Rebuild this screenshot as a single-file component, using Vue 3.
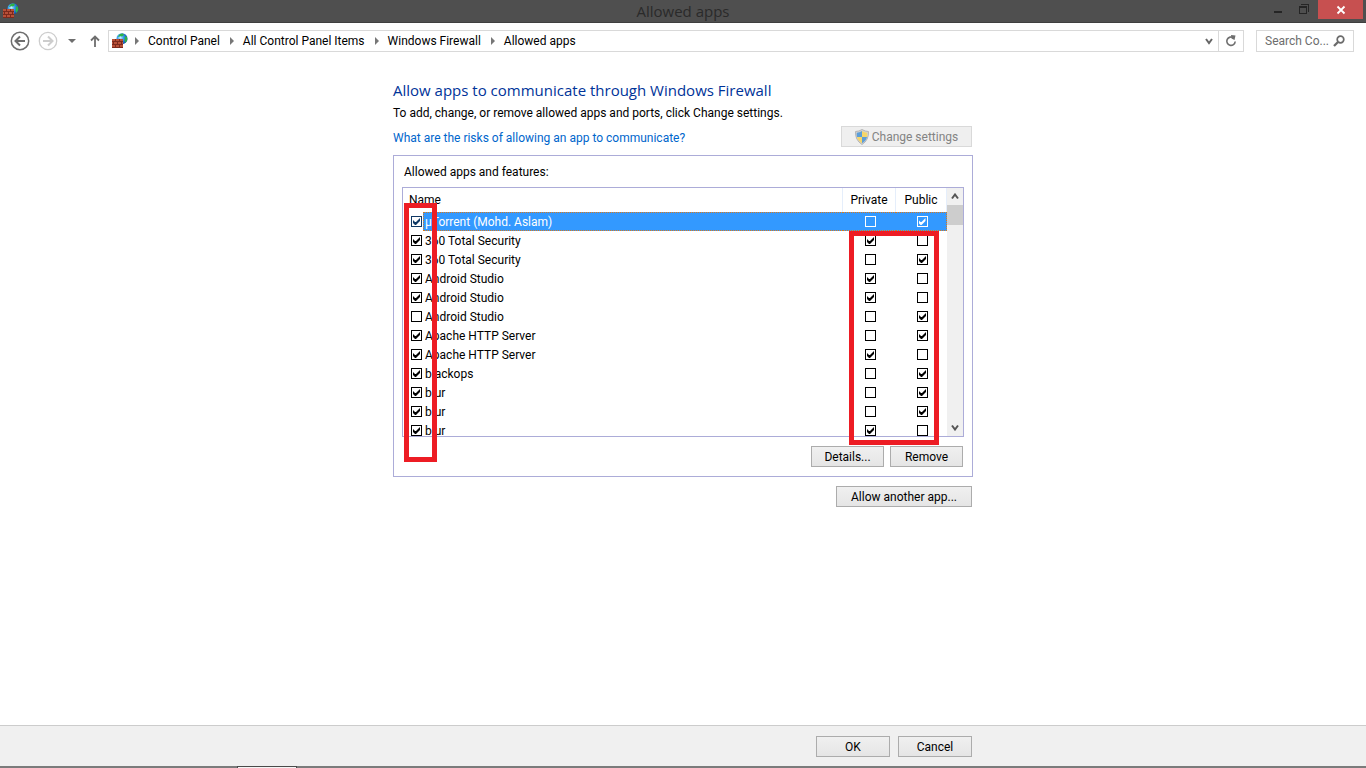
<script setup>
import { ref } from 'vue'

const crumbs = ['Control Panel', 'All Control Panel Items', 'Windows Firewall', 'Allowed apps']

const apps = ref([
  { name: 'µTorrent (Mohd. Aslam)', on: true, priv: false, pub: true },
  { name: '360 Total Security', on: true, priv: true, pub: false },
  { name: '360 Total Security', on: true, priv: false, pub: true },
  { name: 'Android Studio', on: true, priv: true, pub: false },
  { name: 'Android Studio', on: true, priv: true, pub: false },
  { name: 'Android Studio', on: false, priv: false, pub: true },
  { name: 'Apache HTTP Server', on: true, priv: false, pub: true },
  { name: 'Apache HTTP Server', on: true, priv: true, pub: false },
  { name: 'blackops', on: true, priv: false, pub: true },
  { name: 'blur', on: true, priv: false, pub: true },
  { name: 'blur', on: true, priv: false, pub: true },
  { name: 'blur', on: true, priv: true, pub: false }
])
const selected = ref(0)
</script>

<template>
  <div class="window">
    <svg class="defs" width="0" height="0" aria-hidden="true">
      <defs>
        <radialGradient id="globe" cx="0.35" cy="0.4" r="0.7">
          <stop offset="0" stop-color="#c9f4ff" />
          <stop offset="0.4" stop-color="#3aa0f0" />
          <stop offset="1" stop-color="#0b3fa8" />
        </radialGradient>
        <symbol id="firewall" viewBox="0 0 16 16">
          <circle cx="10" cy="5.7" r="5.5" fill="url(#globe)" />
          <path d="M8 1 L11 0.5 L12 2 L10 3.5 L8 3 L7 4 L6 3.5Z M13 3 L15 4 L15.3 7 L13.5 10 L12.500 8Z" fill="#2fb344" />
          <rect x="0" y="6" width="11" height="9" fill="#7d2a1c" />
          <path d="M0 6h3v2H0z M4 6h3v2H4z M8 6h3v2H8z M0 9h1v2H0z M2 9h3v2H2z M6 9h3v2H6z M10 9h1v2h-1z M0 12h3v2H0z M4 12h3v2H4z M8 12h3v2H8z" fill="#b85038" />
        </symbol>
      </defs>
    </svg>

    <header class="titlebar">
      <svg class="app-icon" width="16" height="16"><use href="#firewall" /></svg>
      <h1>Allowed apps</h1>
      <div class="controls">
        <button class="min" aria-label="Minimize">
          <svg width="12" height="12"><path d="M2 6h8v2H2z" fill="#252525" /></svg>
        </button>
        <button class="max" aria-label="Restore">
          <svg width="12" height="12" shape-rendering="crispEdges"><path d="M1 3h8v8H1z M2 5v5h6V5z M3 1h8v8h-1V2H3z" fill="#252525" fill-rule="evenodd" /></svg>
        </button>
        <button class="close" aria-label="Close">
          <svg width="10" height="10"><path d="M1.5 1.5l7 7M8.500 1.500l-7 7" stroke="#fff" stroke-width="1.8" /></svg>
        </button>
      </div>
    </header>

    <nav class="toolbar" aria-label="Navigation">
      <button class="back" aria-label="Back">
        <svg width="20" height="20" fill="none" stroke="#6e6e6e"><circle cx="10" cy="10" r="8.700" stroke-width="1.500" /><path d="M15 10H6M10 5.500L5.500 10L10 14.500" stroke-width="2" /></svg>
      </button>
      <button class="forward" aria-label="Forward">
        <svg width="20" height="20" fill="none" stroke="#cdcdcd"><circle cx="10" cy="10" r="8.700" stroke-width="1.300" /><path d="M5 10h9M10 5.500L14.500 10L10 14.500" stroke-width="2" /></svg>
      </button>
      <button class="recent" aria-label="Recent locations">
        <svg width="8" height="4"><path d="M0 0h8L4 4z" fill="#6e6e6e" /></svg>
      </button>
      <button class="up" aria-label="Up">
        <svg width="10" height="12" fill="none" stroke="#6e6e6e" stroke-width="1.800"><path d="M5 12V1.500M1 5.500L5 1.500L9 5.500" /></svg>
      </button>
      <div class="address">
        <svg class="place" width="16" height="16"><use href="#firewall" /></svg>
        <template v-for="crumb in crumbs" :key="crumb">
          <svg class="sep" width="4" height="8"><path d="M0 0l4 4l-4 4z" fill="#777" /></svg>
          <a href="#">{{ crumb }}</a>
        </template>
        <button class="history" aria-label="Previous locations">
          <svg width="8" height="7" fill="none" stroke="#666" stroke-width="2"><path d="M1 1l3 4l3-4" /></svg>
        </button>
        <button class="refresh" aria-label="Refresh">
          <svg width="12" height="12" fill="none" stroke="#6e6e6e" stroke-width="1.600"><path d="M8.500 2.800A4.200 4.200 0 1 0 10.200 6.500" /><path d="M6 0L10.500 0.500L9.500 5L6.500 3.500z" fill="#6e6e6e" stroke="none" /></svg>
        </button>
      </div>
      <div class="search">
        <input type="text" aria-label="Search Control Panel" placeholder="Search Co..." />
        <svg width="12" height="12" fill="none" stroke="#6a6a6a"><circle cx="7.500" cy="4.500" r="3.300" stroke-width="1.700" /><path d="M5 7L1 11" stroke-width="2.300" /></svg>
      </div>
    </nav>

    <main>
      <div class="content">
        <h2>Allow apps to communicate through Windows Firewall</h2>
        <p>To add, change, or remove allowed apps and ports, click Change settings.</p>
        <div class="help-row">
          <a href="#">What are the risks of allowing an app to communicate?</a>
          <button class="btn change" disabled>
            <svg width="14" height="16" viewBox="0 0 14 16">
              <path d="M7 0.500Q10 2.500 13.500 2.500Q14 11 7 15.500Q0 11 0.500 2.500Q4 2.500 7 0.500z" fill="#d4d4d4" stroke="#b5b5b5" />
              <path d="M7 2v6H2Q1.500 6 1.800 3.700Q4.500 3.600 7 2z M7 8h5Q11 12 7 14.200z" fill="#5d9ed8" />
              <path d="M7 2Q9.500 3.600 12.200 3.700Q12.500 6 12 8H7z M2 8h5v6.200Q3 12 2 8z" fill="#f5d66b" />
            </svg>
            Change settings
          </button>
        </div>

        <section class="panel">
          <h3 id="list-title">Allowed apps and features:</h3>
          <div class="list">
            <table aria-labelledby="list-title">
              <thead>
                <tr><th class="name">Name</th><th>Private</th><th>Public</th></tr>
              </thead>
              <tbody>
                <tr v-for="(app, i) in apps" :key="i" :class="{ selected: i === selected }" @click="selected = i">
                  <td class="name">
                    <label><input v-model="app.on" type="checkbox" /><span>{{ app.name }}</span></label>
                  </td>
                  <td><input v-model="app.priv" type="checkbox" :aria-label="app.name + ' private'" /></td>
                  <td><input v-model="app.pub" type="checkbox" :aria-label="app.name + ' public'" /></td>
                </tr>
              </tbody>
            </table>
            <div class="scroll">
              <button aria-label="Scroll up"><svg width="8" height="7" fill="none" stroke="#555" stroke-width="2"><path d="M1 5.500l3-4l3 4" /></svg></button>
              <div class="thumb"></div>
              <button class="down" aria-label="Scroll down"><svg width="8" height="7" fill="none" stroke="#555" stroke-width="2"><path d="M1 1.500l3 4l3-4" /></svg></button>
            </div>
          </div>
          <div class="actions">
            <button class="btn">Details...</button>
            <button class="btn">Remove</button>
          </div>
          <div class="mark mark-left"></div>
          <div class="mark mark-right"></div>
        </section>

        <div class="another">
          <button class="btn wide">Allow another app...</button>
        </div>
      </div>
    </main>

    <footer>
      <div class="footer-inner">
        <button class="btn">OK</button>
        <button class="btn">Cancel</button>
      </div>
    </footer>
    <div class="taskbar"><div class="task"></div></div>
  </div>
</template>

<style>
body {
  margin: 0;
}
</style>

<style scoped>
.window {
  display: flex;
  flex-direction: column;
  min-height: 100vh;
  background: #fff;
  color: #000;
  font: 12px/16px Roboto, "Noto Sans", sans-serif;
}
.window * {
  box-sizing: border-box;
}
.defs {
  position: absolute;
}
button,
input {
  font: inherit;
  color: inherit;
  margin: 0;
}
button {
  display: flex;
  align-items: center;
  justify-content: center;
  padding: 0;
  border: 0;
  background: none;
}
svg {
  display: block;
  flex: none;
}
a {
  text-decoration: none;
  color: inherit;
}
h1,
h2,
h3,
p {
  margin: 0;
  font-weight: 400;
}

.titlebar {
  display: grid;
  grid-template-columns: 1fr auto 1fr;
  height: 23px;
  background: #4f4f4f;
  border-bottom: 1px solid #3f3f3f;
}
.app-icon {
  margin: 3px 0 0 3px;
}
h1 {
  font: 15px/22px "Open Sans", "Noto Sans", sans-serif;
  color: #2a2a2a;
}
.controls {
  display: flex;
  justify-content: flex-end;
  align-items: flex-start;
  padding-right: 3px;
}
.controls button {
  width: 26px;
  height: 19px;
}
.controls .min {
  padding-top: 3px;
}
.controls .max {
  padding-bottom: 1px;
}
.controls .close {
  width: 45px;
  margin-left: 1px;
  background: #c75050;
}

.toolbar {
  display: flex;
  align-items: center;
  height: 36px;
  padding: 0 12px 0 10px;
}
.forward {
  margin-left: 8px;
}
.recent {
  margin-left: 10px;
}
.up {
  margin: 0 8px 0 14px;
}
.address {
  display: flex;
  align-items: center;
  flex: 1;
  height: 22px;
  padding-left: 3px;
  border: 1px solid #d9d9d9;
}
.sep {
  margin: 0 9px 0 10px;
}
.place + .sep {
  margin-left: 7px;
}
.history {
  width: 18px;
  height: 20px;
  margin-left: auto;
}
.refresh {
  width: 25px;
  height: 20px;
  border-left: 1px solid #d9d9d9;
}
.search {
  display: flex;
  align-items: center;
  width: 98px;
  height: 22px;
  margin-left: 12px;
  padding: 0 8px;
  border: 1px solid #d9d9d9;
}
.search input {
  flex: 1;
  min-width: 0;
  padding: 0;
  border: 0;
  outline: 0;
}
.search input::placeholder {
  color: #6d6d6d;
  opacity: 1;
}

main {
  flex: 1;
  padding-top: 20px;
}
.content,
.footer-inner {
  width: 100%;
  max-width: 580px;
  margin: 0 auto;
}
h2 {
  font: 15px/22px "Open Sans", "Noto Sans", sans-serif;
  color: #003399;
}
p {
  margin-top: 4px;
}
.help-row {
  display: flex;
  justify-content: space-between;
  padding-right: 1px;
  margin: 5px 0 8px;
}
.help-row a {
  margin-top: 4px;
  color: #0066cc;
}
.btn {
  min-width: 74px;
  height: 21px;
  border: 1px solid #acacac;
  background: linear-gradient(#f0f0f0, #e5e5e5);
}
.btn:disabled {
  border-color: #d9d9d9;
  background: #efefef;
  color: #838383;
}
.change {
  min-width: 131px;
  gap: 3px;
}
.wide {
  min-width: 136px;
}

.panel {
  position: relative;
  padding: 8px 8px 9px;
  border: 1px solid #acacd8;
}
h3 {
  font-size: 12px;
  line-height: 16px;
  padding-left: 2px;
}
.list {
  display: flex;
  height: 250px;
  margin-top: 7px;
  overflow: hidden;
  border: 1px solid #acacd8;
}
table {
  flex: 1;
  height: 252px;
  border-collapse: separate;
  border-spacing: 0;
  table-layout: fixed;
}
th {
  width: 53px;
  height: 24px;
  padding: 0;
  font-weight: 400;
  border-right: 1px solid #e5eefb;
}
th.name {
  width: auto;
  padding-left: 6px;
  text-align: left;
}
th:last-child {
  width: 51px;
}
td {
  height: 19px;
  padding: 0 0 0 2px;
  text-align: center;
}
td.name {
  padding-left: 8px;
  text-align: left;
}
label {
  display: flex;
  align-items: center;
}
label span {
  flex: 1;
  height: 19px;
  margin-left: 1px;
  padding-left: 2px;
  line-height: 20px;
}
input[type="checkbox"] {
  appearance: none;
  display: block;
  flex: none;
  width: 11px;
  height: 11px;
  margin: 0 auto;
  border: 1px solid #000;
  background: #fff;
}
label input[type="checkbox"] {
  margin: 0;
}
input[type="checkbox"]:checked::before {
  content: "";
  display: block;
  width: 7px;
  height: 7px;
  margin: 1px;
  background: #000;
  clip-path: polygon(0 2px, 2px 4px, 3px 4px, 7px 0, 7px 3px, 3px 7px, 2px 7px, 0 5px);
}
.selected td:not(.name),
.selected label span {
  --dots: repeating-linear-gradient(90deg, #d97a1c 0 1px, #3399ff 1px 2px);
  color: #fff;
  background: var(--dots) top / 100% 1px no-repeat, var(--dots) bottom / 100% 1px no-repeat, #3399ff;
}
.selected label span {
  border-left: 1px dotted #d97a1c;
  padding-left: 1px;
}
.selected td:last-child {
  border-right: 1px dotted #d97a1c;
}
.selected label input[type="checkbox"] {
  border-color: #0f3864;
}
.selected td:not(.name) input {
  border-color: #fff;
  background: #3399ff;
}
.selected label input::before {
  background: #0f3864 !important;
}
.selected td:not(.name) input::before {
  background: #fff !important;
}
.scroll {
  display: flex;
  flex-direction: column;
  width: 16px;
  background: #f0f0f0;
}
.scroll button {
  width: 100%;
  height: 17px;
}
.thumb {
  height: 20px;
  background: #cdcdcd;
}
.scroll .down {
  margin-top: auto;
}
.actions {
  display: flex;
  justify-content: flex-end;
  gap: 6px;
  margin-top: 9px;
  padding-right: 1px;
}
.actions .btn {
  min-width: 73px;
}
.mark {
  position: absolute;
  border: 5px solid #ed1c24;
  pointer-events: none;
}
.mark-left {
  left: 10px;
  top: 47px;
  width: 33px;
  height: 259px;
}
.mark-right {
  right: 33px;
  top: 75px;
  width: 90px;
  height: 214px;
}
.another {
  display: flex;
  justify-content: flex-end;
  padding: 9px 1px 0 0;
}
footer {
  border-top: 1px solid #cccccc;
  background: #f0f0f0;
  padding: 10px 0 9px;
}
.footer-inner {
  display: flex;
  justify-content: flex-end;
  gap: 8px;
  padding-right: 1px;
}
.taskbar {
  height: 2px;
  background: #7b7b7b;
}
.task {
  width: 60px;
  height: 2px;
  margin-left: 237px;
  border: 1px solid #4a4a4a;
  border-bottom: 0;
  background: #f4f4f4;
}
</style>
